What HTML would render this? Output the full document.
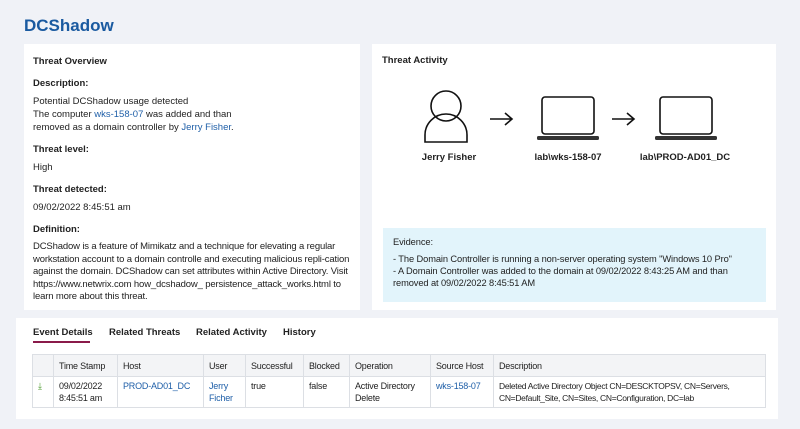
<!DOCTYPE html><html><head><style>
body{margin:0;width:800px;height:429px;background:#f0f2f7;font-family:"Liberation Sans",sans-serif;font-size:9.5px;color:#222;position:relative;overflow:hidden}
.a{position:absolute}
.p{position:absolute;background:#fff}
b{font-weight:bold}
.l{color:#1f5fa8}
table{border-collapse:collapse;table-layout:fixed;position:absolute;left:32px;top:354px;width:734px;font-size:9px;letter-spacing:-0.2px}
td{border:1px solid #dcdfe4;padding:3px 5px;vertical-align:top;line-height:12px;overflow:hidden}
tr.h td{background:#f3f4f6;height:15px;vertical-align:middle}
</style></head><body>
<div class="a" style="left:24px;top:16px;font-size:17px;font-weight:bold;color:#1a5aa0">DCShadow</div>
<div class="p" style="left:24px;top:44px;width:336px;height:266px"></div>
<div class="p" style="left:372px;top:44px;width:404px;height:266px"></div>
<div class="p" style="left:16px;top:318px;width:762px;height:101px"></div>
<div class="a" style="left:33px;top:55px;line-height:13px;width:322px">
<b>Threat Overview</b><div style="height:9px"></div>
<b>Description:</b><div style="height:5px"></div>
Potential DCShadow usage detected<br>The computer <span class="l">wks-158-07</span> was added and than<br>removed as a domain controller by <span class="l">Jerry Fisher</span>.<div style="height:9px"></div>
<b>Threat level:</b><div style="height:5px"></div>High<div style="height:9px"></div>
<b>Threat detected:</b><div style="height:5px"></div>09/02/2022 8:45:51 am<div style="height:9px"></div>
<b>Definition:</b><div style="height:5px"></div>
<div style="line-height:12.5px;letter-spacing:-0.15px">DCShadow is a feature of Mimikatz and a technique for elevating a regular<br>workstation account to a domain controlle and executing malicious repli-cation<br>against the domain. DCShadow can set attributes within Active Directory. Visit<br>https://www.netwrix.com how_dcshadow_ persistence_attack_works.html to<br>learn more about this threat.</div>
</div>
<div class="a" style="left:382px;top:55px"><b>Threat Activity</b></div>
<svg class="a" style="left:372px;top:44px" width="404" height="130">
<g fill="none" stroke="#111" stroke-width="1.6">
<circle cx="74" cy="62" r="15"/>
<path d="M53 98 V91 A21 21 0 0 1 95 91 V98 Z"/>
<path d="M118 75 H140 M133 69 L140 75 L133 81"/>
<path d="M240 75 H262 M255 69 L262 75 L255 81"/>
<rect x="170" y="53" width="52" height="37" rx="3"/>
<rect x="288" y="53" width="52" height="37" rx="3"/>
</g>
<rect x="165" y="92" width="62" height="4" rx="1.5" fill="#333"/>
<rect x="283" y="92" width="62" height="4" rx="1.5" fill="#333"/>
</svg>
<div class="a" style="left:404px;top:152px;width:90px;text-align:center;font-weight:bold">Jerry Fisher</div>
<div class="a" style="left:520px;top:152px;width:96px;text-align:center;font-weight:bold">lab\wks-158-07</div>
<div class="a" style="left:630px;top:152px;width:110px;text-align:center;font-weight:bold">lab\PROD-AD01_DC</div>
<div class="a" style="left:383px;top:228px;width:373px;height:66px;background:#e2f4fb;padding:8px 0 0 10px;line-height:12px;font-size:9.3px;letter-spacing:-0.1px">Evidence:<div style="height:5px"></div>- The Domain Controller is running a non-server operating system "Windows 10 Pro"<br>- A Domain Controller was added to the domain at 09/02/2022 8:43:25 AM and than<br>removed at 09/02/2022 8:45:51 AM</div>
<div class="a" style="left:33px;top:327px;font-weight:bold">Event Details</div>
<div class="a" style="left:33px;top:341px;width:57px;height:2px;background:#8a1a4a"></div>
<div class="a" style="left:109px;top:327px;font-weight:bold">Related Threats</div>
<div class="a" style="left:196px;top:327px;font-weight:bold">Related Activity</div>
<div class="a" style="left:283px;top:327px;font-weight:bold">History</div>
<table>
<colgroup><col style="width:21px"><col style="width:64px"><col style="width:86px"><col style="width:42px"><col style="width:58px"><col style="width:46px"><col style="width:81px"><col style="width:63px"><col></colgroup>
<tr class="h"><td></td><td>Time Stamp</td><td>Host</td><td>User</td><td>Successful</td><td>Blocked</td><td>Operation</td><td>Source Host</td><td>Description</td></tr>
<tr><td style="color:#4a9a2a">⤓</td><td>09/02/2022<br>8:45:51 am</td><td class="l">PROD-AD01_DC</td><td class="l">Jerry<br>Ficher</td><td>true</td><td>false</td><td>Active Directory<br>Delete</td><td class="l">wks-158-07</td><td style="font-size:8.5px;white-space:nowrap;letter-spacing:-0.3px">Deleted Active Directory Object CN=DESCKTOPSV, CN=Servers,<br>CN=Default_Site, CN=Sites, CN=Configuration, DC=lab</td></tr>
</table>
</body></html>
